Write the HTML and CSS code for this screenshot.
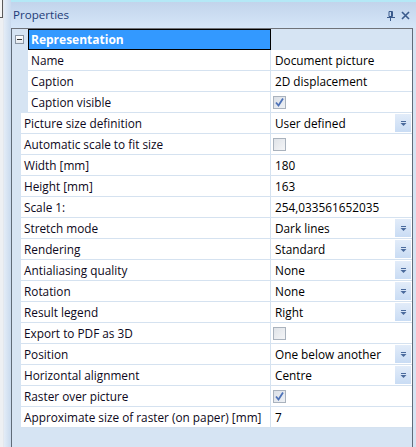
FILE: index.html
```html
<!DOCTYPE html>
<html>
<head>
<meta charset="utf-8">
<link rel="stylesheet" href="styles.css">
</head>
<body>
<div class="app">
  <div class="side">
    <div class="side-box"></div>
    <div class="side-strip"></div>
  </div>
  <div class="panel">
    <div class="titlebar">
      <span class="title">Properties</span>
      <span class="tools">
        <svg class="pin" width="8" height="10" viewBox="0 0 8 10"><path d="M2 0.5H5.5V5.5H2Z M4.5 0.5V5.5" fill="none" stroke="#3b5b8c" stroke-width="1"/><path d="M0 6.5H8 M3.5 6.5V10" stroke="#3b5b8c" stroke-width="1"/></svg>
        <svg class="close" width="9" height="9" viewBox="0 0 9 9"><path d="M1 1L8 8M8 1L1 8" stroke="#3b5b8c" stroke-width="1.6"/></svg>
      </span>
    </div>
    <div class="grid">
      <div class="row cat">
        <div class="margin nest"><span class="minus"></span></div>
        <div class="cat-label">Representation</div>
        <div class="cat-rest"></div>
      </div>
      <div class="row"><div class="margin nest"></div><div class="name">Name</div><div class="value">Document picture</div></div>
      <div class="row"><div class="margin nest"></div><div class="name">Caption</div><div class="value">2D displacement</div></div>
      <div class="row"><div class="margin nest"></div><div class="name">Caption visible</div><div class="value"><span class="check on"><svg width="11" height="11" viewBox="0 0 11 11"><path d="M2 5.5L4.5 8.5L9 1.5" fill="none" stroke="#4d72b8" stroke-width="1.8"/></svg></span></div></div>
      <div class="row"><div class="margin"></div><div class="name">Picture size definition</div><div class="value"><span class="txt">User defined</span><span class="drop"><svg width="7" height="5" viewBox="0 0 7 5"><path d="M1 0.5H6" stroke="#4a6a9c" stroke-width="1"/><path d="M0.5 2H6.5L3.5 5Z" fill="#4a6a9c"/></svg></span></div></div>
      <div class="row"><div class="margin"></div><div class="name">Automatic scale to fit size</div><div class="value"><span class="check"></span></div></div>
      <div class="row"><div class="margin"></div><div class="name">Width [mm]</div><div class="value">180</div></div>
      <div class="row"><div class="margin"></div><div class="name">Height [mm]</div><div class="value">163</div></div>
      <div class="row"><div class="margin"></div><div class="name">Scale 1:</div><div class="value">254,033561652035</div></div>
      <div class="row"><div class="margin"></div><div class="name">Stretch mode</div><div class="value"><span class="txt">Dark lines</span><span class="drop"><svg width="7" height="5" viewBox="0 0 7 5"><path d="M1 0.5H6" stroke="#4a6a9c" stroke-width="1"/><path d="M0.5 2H6.5L3.5 5Z" fill="#4a6a9c"/></svg></span></div></div>
      <div class="row"><div class="margin"></div><div class="name">Rendering</div><div class="value"><span class="txt">Standard</span><span class="drop"><svg width="7" height="5" viewBox="0 0 7 5"><path d="M1 0.5H6" stroke="#4a6a9c" stroke-width="1"/><path d="M0.5 2H6.5L3.5 5Z" fill="#4a6a9c"/></svg></span></div></div>
      <div class="row"><div class="margin"></div><div class="name">Antialiasing quality</div><div class="value"><span class="txt">None</span><span class="drop"><svg width="7" height="5" viewBox="0 0 7 5"><path d="M1 0.5H6" stroke="#4a6a9c" stroke-width="1"/><path d="M0.5 2H6.5L3.5 5Z" fill="#4a6a9c"/></svg></span></div></div>
      <div class="row"><div class="margin"></div><div class="name">Rotation</div><div class="value"><span class="txt">None</span><span class="drop"><svg width="7" height="5" viewBox="0 0 7 5"><path d="M1 0.5H6" stroke="#4a6a9c" stroke-width="1"/><path d="M0.5 2H6.5L3.5 5Z" fill="#4a6a9c"/></svg></span></div></div>
      <div class="row"><div class="margin"></div><div class="name">Result legend</div><div class="value"><span class="txt">Right</span><span class="drop"><svg width="7" height="5" viewBox="0 0 7 5"><path d="M1 0.5H6" stroke="#4a6a9c" stroke-width="1"/><path d="M0.5 2H6.5L3.5 5Z" fill="#4a6a9c"/></svg></span></div></div>
      <div class="row"><div class="margin"></div><div class="name">Export to PDF as 3D</div><div class="value"><span class="check"></span></div></div>
      <div class="row"><div class="margin"></div><div class="name">Position</div><div class="value"><span class="txt">One below another</span><span class="drop"><svg width="7" height="5" viewBox="0 0 7 5"><path d="M1 0.5H6" stroke="#4a6a9c" stroke-width="1"/><path d="M0.5 2H6.5L3.5 5Z" fill="#4a6a9c"/></svg></span></div></div>
      <div class="row"><div class="margin"></div><div class="name">Horizontal alignment</div><div class="value"><span class="txt">Centre</span><span class="drop"><svg width="7" height="5" viewBox="0 0 7 5"><path d="M1 0.5H6" stroke="#4a6a9c" stroke-width="1"/><path d="M0.5 2H6.5L3.5 5Z" fill="#4a6a9c"/></svg></span></div></div>
      <div class="row"><div class="margin"></div><div class="name">Raster over picture</div><div class="value"><span class="check on"><svg width="11" height="11" viewBox="0 0 11 11"><path d="M2 5.5L4.5 8.5L9 1.5" fill="none" stroke="#4d72b8" stroke-width="1.8"/></svg></span></div></div>
      <div class="row"><div class="margin"></div><div class="name">Approximate size of raster (on paper) [mm]</div><div class="value">7</div></div>
    </div>
  </div>
</div>
</body>
</html>
```

FILE: styles.css
```css
html, body {
  margin: 0;
  padding: 0;
}
body {
  width: 416px;
  height: 447px;
  overflow: hidden;
  background: #d6e4f3;
  font-family: "Open Sans", "Liberation Sans", Arial, sans-serif;
  font-size: 11.8px;
  color: #000;
}
.app {
  display: flex;
  height: 447px;
}
.side {
  width: 11px;
  display: flex;
  flex-shrink: 0;
}
.side-box {
  width: 3px;
  background: #eef0f3;
  border-right: 1px solid #e4e8ee;
  position: relative;
}
.side-box::before {
  content: "";
  position: absolute;
  left: 0;
  top: 0;
  width: 3px;
  height: 18px;
  background: #f6f6f6;
  border-right: 1px solid #5a5a5a;
  border-bottom: 1px solid #5a5a5a;
  box-sizing: border-box;
}
.side-strip {
  flex: 1;
  background: linear-gradient(to right, #e3ecf7, #c9daee);
}
.panel {
  flex: 1;
  display: flex;
  flex-direction: column;
  margin-right: 3px;
}
.titlebar {
  height: 26px;
  border-top: 2px solid #b4e8f6;
  background: linear-gradient(#c2d4eb, #d5e6f8);
  display: flex;
  align-items: center;
  justify-content: space-between;
  padding-left: 2px;
  margin-right: -3px;
}
.title {
  color: #1e3c78;
  font-size: 11.6px;
  padding-bottom: 1px;
}
.tools {
  display: flex;
  align-items: center;
  gap: 6px;
  padding-right: 6px;
}
.pin {
  margin-top: 1px;
}
.grid {
  flex: 1;
  border-top: 1px solid #6f737a;
  border-left: 1px solid #5f6b78;
  border-right: 1px solid #5f6b78;
  background: #d6e4f3;
}
.row {
  display: flex;
  height: 21px;
}
.margin {
  width: 9px;
  flex-shrink: 0;
  background: #d6e4f3;
}
.margin.nest {
  width: 16px;
}
.name {
  flex: 1;
  background: #fff;
  border-bottom: 1px solid #d5e2f0;
  border-right: 1px solid #d5e2f0;
  padding-left: 3px;
  line-height: 20px;
  white-space: nowrap;
  overflow: hidden;
  color: #0d0820;
}
.value {
  width: 141px;
  flex-shrink: 0;
  background: #fff;
  border-bottom: 1px solid #d5e2f0;
  padding-left: 4px;
  line-height: 20px;
  display: flex;
  align-items: center;
  box-sizing: border-box;
}
.txt {
  flex: 1;
}
.drop {
  width: 16px;
  height: 18px;
  margin-right: 1px;
  background: linear-gradient(#e2ecf9, #c9dcf4);
  display: flex;
  align-items: center;
  justify-content: center;
}
.check {
  width: 11px;
  height: 11px;
  border: 1px solid #a9b2bd;
  background: linear-gradient(135deg, #dfe3e8, #f4f5f7);
  display: flex;
  align-items: center;
  justify-content: center;
  margin-left: -2px;
}
.check.on {
  background: linear-gradient(135deg, #dbe0e7, #eef1f5);
}
.cat {
  background: #d6e4f3;
}
.cat .margin {
  display: flex;
  align-items: center;
  justify-content: flex-start;
  padding-left: 3px;
  box-sizing: border-box;
}
.minus {
  width: 7px;
  height: 7px;
  border: 1px solid #8a96a4;
  background: linear-gradient(#ffffff, #e3e8ee);
  position: relative;
}
.minus::after {
  content: "";
  position: absolute;
  left: 1px;
  top: 3px;
  width: 5px;
  height: 1px;
  background: #333;
}
.cat-label {
  flex: 1;
  background: #3399ff;
  border: 1px solid #000;
  color: #fff;
  font-weight: bold;
  font-size: 12px;
  line-height: 19px;
  padding-left: 2px;
}
.cat-rest {
  width: 141px;
  flex-shrink: 0;
  background: #d6e4f3;
}
```
